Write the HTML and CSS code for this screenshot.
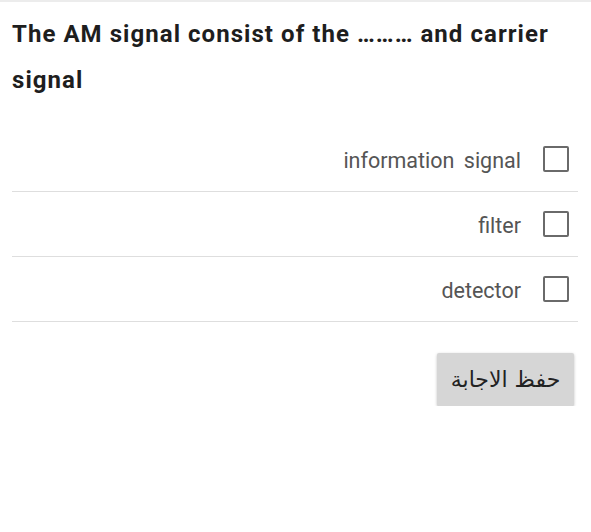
FILE: index.html
```html
<!DOCTYPE html>
<html lang="en">
<head>
<meta charset="utf-8">
<link rel="stylesheet" href="styles.css">
</head>
<body>
<div class="topline"></div>
<main class="question">
  <h1 class="title">The AM signal consist of the ……… and carrier signal</h1>
  <ul class="options">
    <li class="option"><span class="label">information signal</span><span class="box"></span></li>
    <li class="option"><span class="label">filter</span><span class="box"></span></li>
    <li class="option"><span class="label">detector</span><span class="box"></span></li>
  </ul>
  <div class="actions">
    <button class="save" dir="rtl">حفظ الاجابة</button>
  </div>
</main>
</body>
</html>
```

FILE: styles.css
```css
html, body {
  margin: 0;
  padding: 0;
  background: #ffffff;
}
body {
  font-family: Roboto, "Liberation Sans", sans-serif;
}
.topline {
  height: 2px;
  background: #ececec;
}
.question {
  padding: 0 13px 0 12px;
}
.title {
  margin: 9px 0 0 0;
  font-size: 24px;
  font-weight: 700;
  line-height: 46px;
  color: #1e1e1e;
  letter-spacing: 1.05px;
}
.options {
  list-style: none;
  margin: 24px 0 0 0;
  padding: 0;
}
.option {
  display: flex;
  justify-content: flex-end;
  align-items: center;
  height: 64px;
  border-bottom: 1px solid #dedede;
  padding-right: 9px;
}
.label {
  font-size: 21.5px;
  color: #555555;
  margin-right: 22px;
  padding-top: 2px;
  word-spacing: 4px;
}
.box {
  width: 22px;
  height: 22px;
  border: 2px solid #6a6a6a;
  border-radius: 2px;
}
.actions {
  display: flex;
  justify-content: flex-end;
  padding-top: 31px;
  padding-right: 4px;
}
.save {
  width: 137px;
  height: 53px;
  border: none;
  border-radius: 2px;
  background: #d6d6d6;
  box-shadow: 0 1px 3px rgba(0, 0, 0, 0.25);
  font-family: "DejaVu Sans", sans-serif;
  font-size: 22px;
  color: #222222;
  padding: 0;
}
```
